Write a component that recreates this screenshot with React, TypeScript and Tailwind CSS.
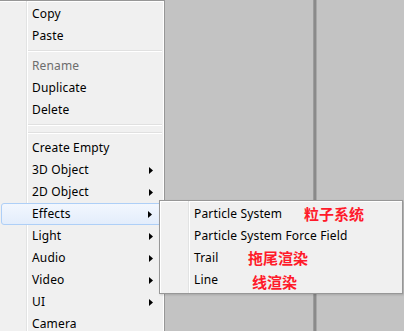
import React from "react";

type Item =
  | { kind: "item"; label: string; sub?: boolean; disabled?: boolean; active?: boolean }
  | { kind: "sep" };

const mainItems: Item[] = [
  { kind: "item", label: "Copy" },
  { kind: "item", label: "Paste" },
  { kind: "sep" },
  { kind: "item", label: "Rename", disabled: true },
  { kind: "item", label: "Duplicate" },
  { kind: "item", label: "Delete" },
  { kind: "sep" },
  { kind: "sep" },
  { kind: "item", label: "Create Empty" },
  { kind: "item", label: "3D Object", sub: true },
  { kind: "item", label: "2D Object", sub: true },
  { kind: "item", label: "Effects", sub: true, active: true },
  { kind: "item", label: "Light", sub: true },
  { kind: "item", label: "Audio", sub: true },
  { kind: "item", label: "Video", sub: true },
  { kind: "item", label: "UI", sub: true },
  { kind: "item", label: "Camera" },
];

const subItems = [
  { label: "Particle System", note: "粒子系统", noteLeft: "left-[144px]", noteTop: "top-0" },
  { label: "Particle System Force Field" },
  { label: "Trail", note: "拖尾渲染", noteLeft: "left-[88px]", noteTop: "top-0" },
  { label: "Line", note: "线渲染", noteLeft: "left-[92px]", noteTop: "top-[2px]" },
];

function Arrow() {
  return (
    <svg width="4" height="7" viewBox="0 0 4 7" className="shrink-0">
      <polygon points="0,0 4,3.5 0,7" fill="#000" />
    </svg>
  );
}

export default function App() {
  return (
    <div
      className="relative flex h-[331px] w-[404px] overflow-hidden bg-[#c3c3c3] text-[12px] tracking-[0.15px] text-black"
      style={{ fontFamily: '"Noto Sans", "Open Sans", sans-serif' }}
    >
      {/* main context menu */}
      <div className="relative h-full w-[165px] shrink-0 border-r border-t border-[#979797] bg-[#f0f0f0] shadow-[inset_-1px_1px_0_#fff]">
        {/* gutter line */}
        <div className="absolute bottom-0 left-[26px] top-0 w-px bg-[#e2e3e3]" />
        <div className="absolute bottom-0 left-[27px] top-0 w-px bg-white" />

        <div className="relative flex flex-col pt-[2px]">
          {mainItems.map((it, i) =>
            it.kind === "sep" ? (
              <div key={i} className="flex h-[8px] flex-col justify-center pl-[28px] pr-[2px]">
                <div className="h-px bg-[#e0e0e0]" />
                <div className="h-px bg-white" />
              </div>
            ) : (
              <div
                key={i}
                className={
                  it.active
                    ? "mx-[1px] flex h-[22px] items-center justify-between rounded-[3px] border border-[#aecff7] bg-gradient-to-b from-[#f2f7fe] to-[#e3edfb] pl-[30px] pr-[10px]"
                    : "flex h-[22px] items-center justify-between pl-[32px] pr-[11px]"
                }
              >
                <span className={it.disabled ? "text-[#6d6d6d]" : ""}>{it.label}</span>
                {it.sub && <Arrow />}
              </div>
            )
          )}
        </div>
      </div>

      {/* scene panels behind */}
      <div className="w-[148px] shrink-0" />
      <div className="flex w-[4px] shrink-0">
        <div className="w-px bg-[#9c9c9c]" />
        <div className="w-[2px] bg-[#8a8a8a]" />
        <div className="w-px bg-[#a8a8a8]" />
      </div>
      <div className="flex-1" />

      {/* Effects submenu */}
      <div className="absolute left-[159px] top-[200px] h-[94px] w-[244px] border border-[#979797] bg-[#f0f0f0] shadow-[inset_1px_1px_0_#fff,1px_1px_2px_rgba(0,0,0,0.15)]">
        <div className="absolute bottom-0 left-[28px] top-0 w-px bg-[#e2e3e3]" />
        <div className="absolute bottom-0 left-[29px] top-0 w-px bg-white" />
        <div className="relative flex flex-col pt-[2px]">
          {subItems.map((it) => (
            <div key={it.label} className="relative flex h-[22px] items-center pl-[34px]">
              <span>{it.label}</span>
              {it.note && (
                <span
                  className={`absolute ${it.noteLeft} ${it.noteTop} flex h-[22px] items-center text-[15px] font-bold tracking-normal text-[#ff1a2a]`}
                  style={{ fontFamily: '"Noto Sans CJK SC", sans-serif' }}
                >
                  {it.note}
                </span>
              )}
            </div>
          ))}
        </div>
      </div>
    </div>
  );
}
